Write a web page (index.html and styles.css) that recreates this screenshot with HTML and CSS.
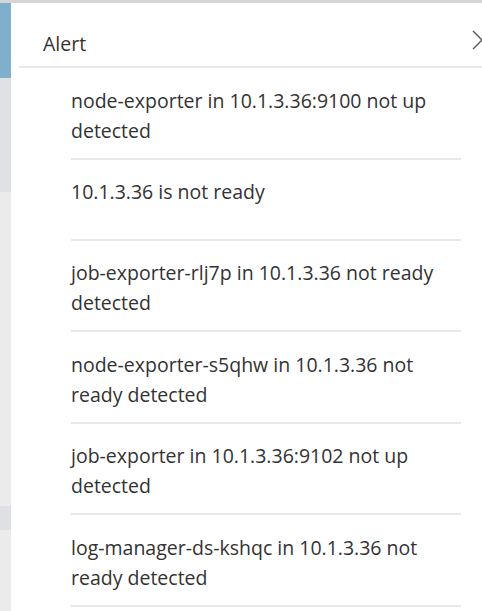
FILE: index.html
```html
<!DOCTYPE html>
<html>
<head>
<meta charset="utf-8">
<link rel="stylesheet" href="styles.css">
</head>
<body>
<div class="topbar"></div>
<div class="main">
  <div class="side">
    <div class="seg seg-blue"></div>
    <div class="seg seg-grey1"></div>
    <div class="seg seg-light1"></div>
    <div class="seg seg-grey2"></div>
    <div class="seg seg-light2"></div>
  </div>
  <div class="panel">
    <div class="header">
      <span class="title">Alert</span>
      <svg class="close" width="24" height="24" viewBox="0 0 24 24"><path d="M3 3 L21 21 M21 3 L3 21" stroke="#555" stroke-width="1.4" fill="none"/></svg>
    </div>
    <ul class="list">
      <li class="item">node-exporter in 10.1.3.36:9100 not up detected</li>
      <li class="item single">10.1.3.36 is not ready</li>
      <li class="item">job-exporter-rlj7p in 10.1.3.36 not ready detected</li>
      <li class="item">node-exporter-s5qhw in 10.1.3.36 not ready detected</li>
      <li class="item">job-exporter in 10.1.3.36:9102 not up detected</li>
      <li class="item">log-manager-ds-kshqc in 10.1.3.36 not ready detected</li>
    </ul>
  </div>
</div>
</body>
</html>
```
FILE: styles.css
```css
html, body {
  margin: 0;
  padding: 0;
}
body {
  width: 482px;
  height: 611px;
  overflow: hidden;
  background: #ffffff;
  font-family: "Open Sans", "Noto Sans", sans-serif;
  color: #333333;
}
.topbar {
  height: 3px;
  background: #d5d5d5;
}
.main {
  display: flex;
  height: 608px;
}
.side {
  width: 11px;
  display: flex;
  flex-direction: column;
  flex-shrink: 0;
}
.seg-blue { height: 75px; background: #7eafcd; }
.seg-grey1 { height: 114px; background: #e0e1e5; }
.seg-light1 { height: 314px; background: #ebebeb; }
.seg-grey2 { height: 24px; background: #dfe0e4; }
.seg-light2 { flex: 1; background: #ebebeb; }
.panel {
  flex: 1;
  background: #ffffff;
  min-width: 0;
}
.header {
  margin-left: 8px;
  height: 65px;
  border-bottom: 2px solid #e8e8e8;
  display: flex;
  align-items: center;
  justify-content: space-between;
  padding-left: 24px;
  padding-top: 18px;
  box-sizing: border-box;
}
.title {
  font-size: 19.5px;
  color: #333333;
}
.close {
  margin-right: -12px;
  margin-top: -8px;
  flex-shrink: 0;
}
.list {
  list-style: none;
  margin: 0 0 0 60px;
  padding: 0;
  width: 390px;
}
.item {
  font-size: 19.5px;
  line-height: 30px;
  padding: 17.5px 0 12px 0;
  border-bottom: 2px solid #e8e8e8;
}
.item.single {
  min-height: 49.5px;
}
```
